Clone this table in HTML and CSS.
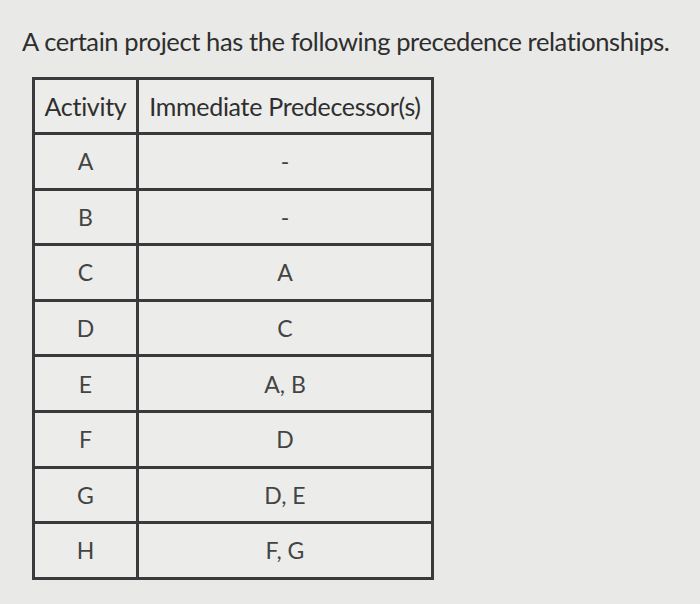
FILE: index.html
```html
<!DOCTYPE html>
<html>
<head>
<meta charset="utf-8">
<link rel="stylesheet" href="styles.css">
</head>
<body>
<p class="title">A certain project has the following precedence relationships.</p>
<table class="prec">
<thead>
<tr><th class="c1">Activity</th><th class="c2">Immediate Predecessor(s)</th></tr>
</thead>
<tbody>
<tr><td>A</td><td>-</td></tr>
<tr><td>B</td><td>-</td></tr>
<tr><td>C</td><td>A</td></tr>
<tr><td>D</td><td>C</td></tr>
<tr><td>E</td><td>A, B</td></tr>
<tr><td>F</td><td>D</td></tr>
<tr><td>G</td><td>D, E</td></tr>
<tr><td>H</td><td>F, G</td></tr>
</tbody>
</table>
</body>
</html>
```
FILE: styles.css
```css
html, body {
  margin: 0;
  padding: 0;
  background: #e9e9e7;
}
body {
  width: 700px;
  height: 604px;
  overflow: hidden;
  font-family: Lato, "Open Sans", sans-serif;
  color: #3a3a3a;
}
.title {
  margin: 0;
  padding: 24px 0 0 22px;
  font-size: 25.5px;
  line-height: 34px;
  letter-spacing: -0.4px;
  color: #2e2e2e;
}
.prec {
  margin: 19px 0 0 32px;
  border-collapse: collapse;
  border: 3px solid #3a3a3d;
  background: #ececea;
}
.prec th, .prec td {
  border: 3px solid #3a3a3d;
  text-align: center;
  padding: 0;
}
.prec th {
  height: 52px;
  font-size: 25px;
  font-weight: 400;
  color: #2f2f2f;
  letter-spacing: -0.3px;
}
.prec th.c1 { width: 101px; }
.prec th.c2 { width: 292px; }
.prec td {
  height: 52.6px;
  font-size: 23px;
  font-weight: 400;
  color: #444;
}
```
